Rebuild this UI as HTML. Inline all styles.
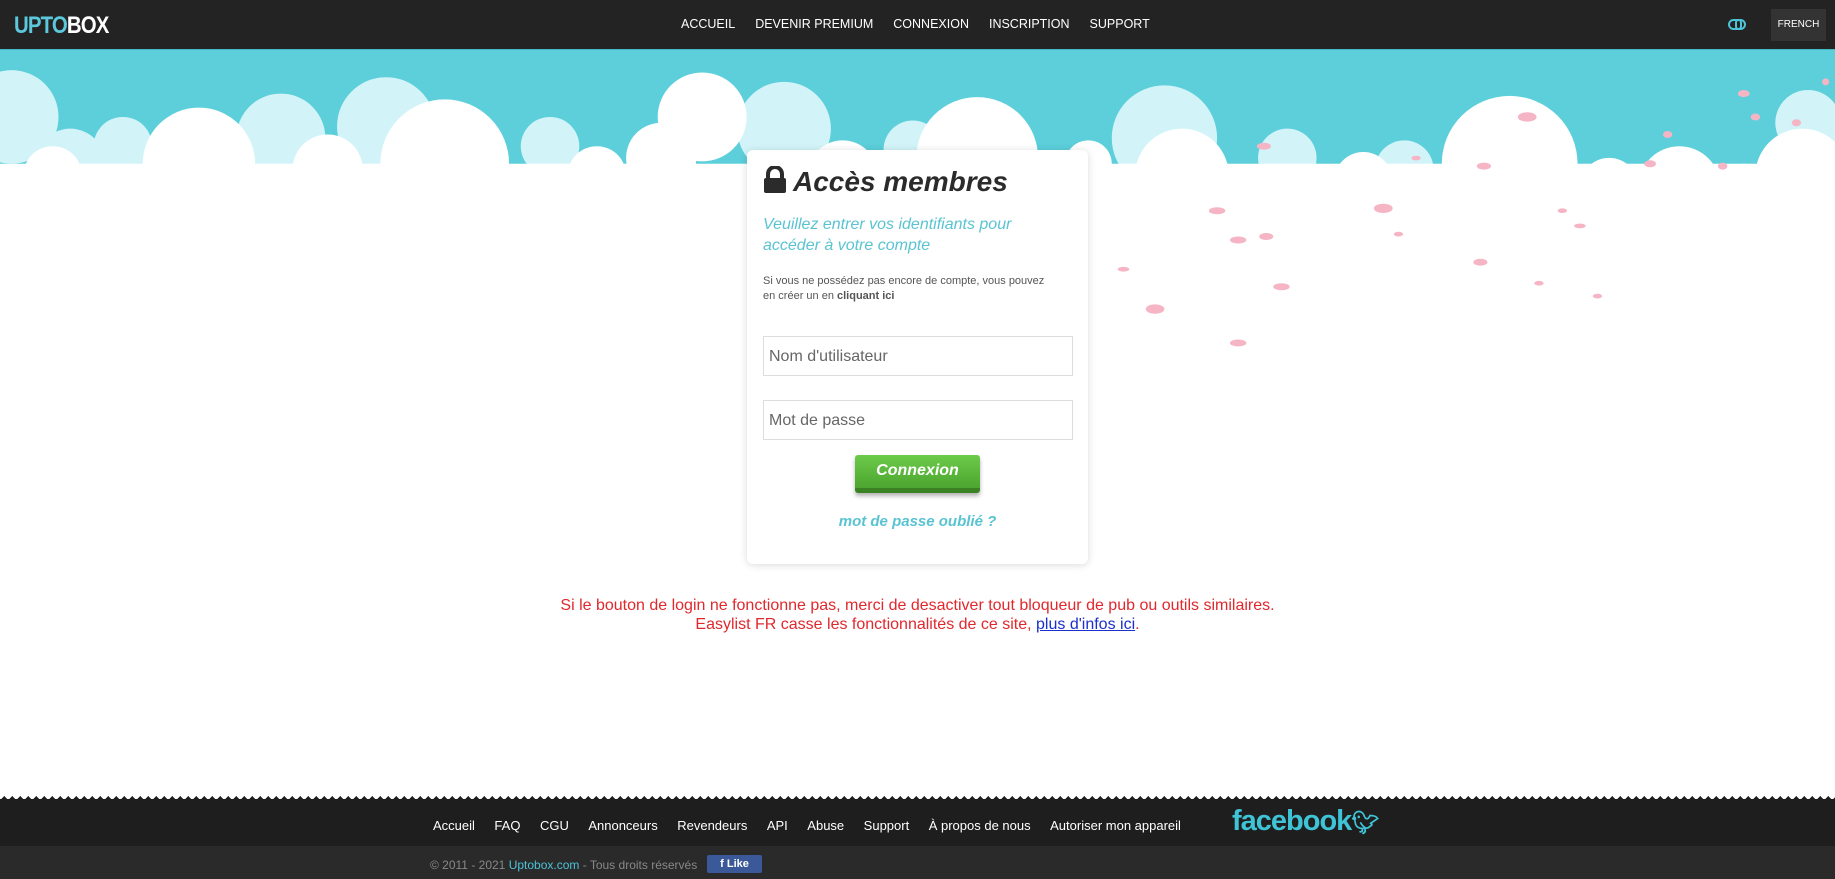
<!DOCTYPE html>
<html><head><meta charset="utf-8"><style>
*{margin:0;padding:0;box-sizing:border-box}
body{width:1835px;height:879px;background:#fff;font-family:"Liberation Sans",sans-serif;position:relative;overflow:hidden}
.nav{position:absolute;top:0;left:0;width:1835px;height:50px;background:#232323;border-bottom:1px solid #3fb9c6}
.logo{position:absolute;left:14px;top:12px;font:900 24px "Liberation Sans",sans-serif;letter-spacing:-1px;transform:scaleX(0.85);transform-origin:left}
.logo .a{color:#5bc8dc}.logo .b{color:#fff}
.menu{position:absolute;top:17px;left:681px;font-size:12.5px;color:#fff;white-space:nowrap}
.menu span{margin-right:20px}
.tog{position:absolute;left:1728px;top:19px;width:18px;height:11px;border:2px solid #4cc3d8;border-radius:6px}
.tog:after{content:"";position:absolute;left:5px;top:-2px;width:7px;height:11px;border:2px solid #4cc3d8;border-radius:6px;box-sizing:border-box}
.fr{position:absolute;left:1771px;top:9px;width:55px;height:32px;background:#333;color:#fff;font-size:10px;line-height:32px;text-align:center}
svg.sky{position:absolute;top:0;left:0}
.card{position:absolute;left:747px;top:150px;width:341px;height:414px;background:#fff;border-radius:6px;box-shadow:0 1px 8px rgba(0,0,0,.15)}
.t{position:absolute;left:16px;top:16px;font:italic bold 28px "Liberation Sans",sans-serif;color:#2b2b2b}
.t i{display:inline-block;vertical-align:-2px;margin-right:6px}
.sub{position:absolute;left:16px;top:64px;width:300px;font:italic 16px/21px "Liberation Sans",sans-serif;color:#5ac3d2}
.sm{position:absolute;left:16px;top:124px;font-size:11px;line-height:15px;color:#555}
.in{position:absolute;left:16px;width:310px;height:40px;border:1px solid #ddd;font-size:16px;color:#666;padding:11px 5px}
.btn{position:absolute;left:108px;top:305px;width:125px;height:38px;border-radius:3px;background:linear-gradient(#6ccb4a,#4ca52f);border-bottom:5px solid #3a8224;color:#fff;font:italic bold 16px "Liberation Sans",sans-serif;text-align:center;line-height:32px;box-shadow:0 3px 4px rgba(0,0,0,.3)}
.fg{position:absolute;left:0;width:341px;top:363px;text-align:center;color:#5ac3d2;font:italic bold 15px "Liberation Sans",sans-serif}
.red{position:absolute;top:596px;left:0;width:1835px;text-align:center;color:#e0282d;font-size:16px;line-height:19px}
.red a{color:#1a2fcc;text-decoration:underline}
.zz{position:absolute;top:792px;left:0;width:1835px;height:8px;background:linear-gradient(135deg,#fff 50%,transparent 50%) 0 0/8px 8px,linear-gradient(-135deg,#fff 50%,#1e1e1e 50%) 0 0/8px 8px}
.f1{position:absolute;top:799px;left:0;width:1835px;height:47px;background:#1e1e1e}
.f2{position:absolute;top:846px;left:0;width:1835px;height:33px;background:#2a2a2a}
.fl{position:absolute;left:433px;top:818px;color:#fff;font-size:13px;white-space:nowrap}
.fl span{margin-right:19.5px}
.fb{position:absolute;left:1232px;top:805px;color:#3fc3d6;font:bold 29px "Liberation Sans",sans-serif;letter-spacing:-1px}
.cp{position:absolute;left:430px;top:858px;color:#888;font-size:12px}
.cp b{color:#4cc3d8;font-weight:normal}
.like{position:absolute;left:707px;top:855px;width:55px;height:18px;background:#3b5998;border-radius:2px;color:#fff;font:bold 11px/18px "Liberation Sans",sans-serif;text-align:center}
</style></head><body>
<svg class="sky" width="1835" height="200" viewBox="0 0 1568 171" preserveAspectRatio="none">
<rect x="0" y="42" width="1568" height="100" fill="#5ccfdb"/>
<g fill="#d2f4f8">
<circle cx="10" cy="100" r="40"/><circle cx="60" cy="140" r="30"/><circle cx="105" cy="125" r="25"/><circle cx="240" cy="118" r="38"/><circle cx="330" cy="108" r="42"/><circle cx="470" cy="125" r="25"/><circle cx="670" cy="110" r="40"/><circle cx="780" cy="128" r="25"/><circle cx="995" cy="118" r="45"/><circle cx="1100" cy="135" r="25"/><circle cx="1545" cy="105" r="28"/><circle cx="1200" cy="145" r="25"/></g>
<g fill="#fff">
<circle cx="170" cy="140" r="48"/><circle cx="380" cy="140" r="55"/><circle cx="600" cy="100" r="38"/><circle cx="565" cy="135" r="30"/><circle cx="835" cy="135" r="52"/><circle cx="1010" cy="150" r="40"/><circle cx="1290" cy="140" r="58"/><circle cx="1435" cy="160" r="35"/><circle cx="1540" cy="150" r="40"/><circle cx="45" cy="150" r="25"/><circle cx="510" cy="150" r="25"/><circle cx="930" cy="140" r="20"/><circle cx="1165" cy="155" r="25"/><circle cx="720" cy="150" r="30"/><circle cx="1375" cy="160" r="25"/><circle cx="1490" cy="160" r="20"/><circle cx="280" cy="145" r="30"/>
<rect x="0" y="140" width="1568" height="31"/></g>
<g fill="#f5b5c5">
<ellipse cx="1305" cy="100" rx="8" ry="4"/><ellipse cx="1080" cy="125" rx="6" ry="3"/><ellipse cx="1490" cy="80" rx="5" ry="3"/><ellipse cx="1500" cy="100" rx="4" ry="3"/><ellipse cx="1425" cy="115" rx="4" ry="3"/><ellipse cx="1268" cy="142" rx="6" ry="3"/><ellipse cx="1472" cy="142" rx="4" ry="3"/><ellipse cx="1535" cy="105" rx="4" ry="3"/><ellipse cx="1560" cy="70" rx="3" ry="3"/><ellipse cx="1410" cy="140" rx="5" ry="3"/></g>
</svg>
<svg style="position:absolute;top:0;left:0" width="1835" height="879" viewBox="0 0 1568 751"><g fill="#f5b5c5">
<ellipse cx="1040" cy="180" rx="7" ry="3"/><ellipse cx="1058" cy="205" rx="7" ry="3"/><ellipse cx="1082" cy="202" rx="6" ry="3"/><ellipse cx="1182" cy="178" rx="8" ry="4"/><ellipse cx="1095" cy="245" rx="7" ry="3"/><ellipse cx="987" cy="264" rx="8" ry="4"/><ellipse cx="1058" cy="293" rx="7" ry="3"/><ellipse cx="1265" cy="224" rx="6" ry="3"/><ellipse cx="960" cy="230" rx="5" ry="2"/><ellipse cx="1315" cy="242" rx="4" ry="2"/><ellipse cx="1350" cy="193" rx="5" ry="2"/><ellipse cx="1195" cy="200" rx="4" ry="2"/><ellipse cx="1335" cy="180" rx="4" ry="2"/><ellipse cx="1365" cy="253" rx="4" ry="2"/><ellipse cx="1210" cy="135" rx="4" ry="2"/></g></svg>
<div class="nav">
<div class="logo"><span class="a">UPTO</span><span class="b">BOX</span></div>
<div class="menu"><span>ACCUEIL</span><span>DEVENIR PREMIUM</span><span>CONNEXION</span><span>INSCRIPTION</span><span>SUPPORT</span></div>
<div class="tog"></div>
<div class="fr">FRENCH</div>
</div>
<div class="card">
<div class="t"><i><svg width="24" height="27" viewBox="0 0 24 27"><path d="M5 12V8a7 7 0 0 1 14 0v4" fill="none" stroke="#2b2b2b" stroke-width="4"/><rect x="1" y="12" width="22" height="15" rx="2" fill="#2b2b2b"/></svg></i>Accès membres</div>
<div class="sub">Veuillez entrer vos identifiants pour accéder à votre compte</div>
<div class="sm">Si vous ne possédez pas encore de compte, vous pouvez<br>en créer un en <b>cliquant ici</b></div>
<div class="in" style="top:186px">Nom d'utilisateur</div>
<div class="in" style="top:250px">Mot de passe</div>
<div class="btn">Connexion</div>
<div class="fg">mot de passe oublié ?</div>
</div>
<div class="red">Si le bouton de login ne fonctionne pas, merci de desactiver tout bloqueur de pub ou outils similaires.<br>Easylist FR casse les fonctionnalités de ce site, <a>plus d'infos ici</a>.</div>
<div class="zz"></div>
<div class="f1"></div><div class="f2"></div>
<div class="fl"><span>Accueil</span><span>FAQ</span><span>CGU</span><span>Annonceurs</span><span>Revendeurs</span><span>API</span><span>Abuse</span><span>Support</span><span>À propos de nous</span><span>Autoriser mon appareil</span></div>
<div class="fb">facebook<span style="font-size:22px">🐦︎</span></div>
<div class="cp">© 2011 - 2021 <b>Uptobox.com</b> - Tous droits réservés</div>
<div class="like">f Like</div>
</body></html>
